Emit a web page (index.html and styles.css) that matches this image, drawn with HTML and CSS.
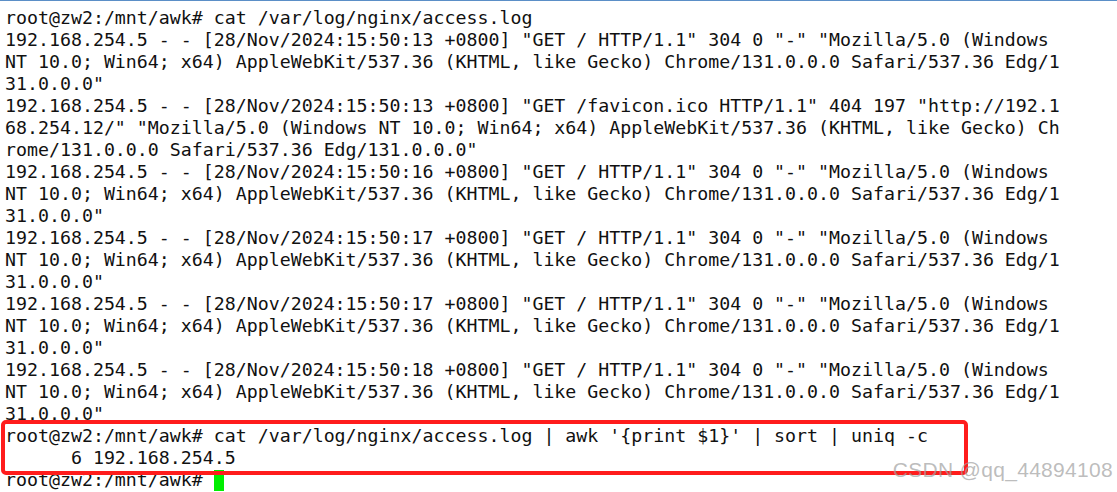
FILE: index.html
```html
<!DOCTYPE html>
<html lang="en">
<head>
<meta charset="utf-8">
<title>Terminal</title>
<link rel="stylesheet" href="styles.css">
</head>
<body>
<div class="term">
<div class="line">root@zw2:/mnt/awk# cat /var/log/nginx/access.log</div>
<div class="line">192.168.254.5 - - [28/Nov/2024:15:50:13 +0800] "GET / HTTP/1.1" 304 0 "-" "Mozilla/5.0 (Windows</div>
<div class="line">NT 10.0; Win64; x64) AppleWebKit/537.36 (KHTML, like Gecko) Chrome/131.0.0.0 Safari/537.36 Edg/1</div>
<div class="line">31.0.0.0"</div>
<div class="line">192.168.254.5 - - [28/Nov/2024:15:50:13 +0800] "GET /favicon.ico HTTP/1.1" 404 197 "http://192.1</div>
<div class="line">68.254.12/" "Mozilla/5.0 (Windows NT 10.0; Win64; x64) AppleWebKit/537.36 (KHTML, like Gecko) Ch</div>
<div class="line">rome/131.0.0.0 Safari/537.36 Edg/131.0.0.0"</div>
<div class="line">192.168.254.5 - - [28/Nov/2024:15:50:16 +0800] "GET / HTTP/1.1" 304 0 "-" "Mozilla/5.0 (Windows</div>
<div class="line">NT 10.0; Win64; x64) AppleWebKit/537.36 (KHTML, like Gecko) Chrome/131.0.0.0 Safari/537.36 Edg/1</div>
<div class="line">31.0.0.0"</div>
<div class="line">192.168.254.5 - - [28/Nov/2024:15:50:17 +0800] "GET / HTTP/1.1" 304 0 "-" "Mozilla/5.0 (Windows</div>
<div class="line">NT 10.0; Win64; x64) AppleWebKit/537.36 (KHTML, like Gecko) Chrome/131.0.0.0 Safari/537.36 Edg/1</div>
<div class="line">31.0.0.0"</div>
<div class="line">192.168.254.5 - - [28/Nov/2024:15:50:17 +0800] "GET / HTTP/1.1" 304 0 "-" "Mozilla/5.0 (Windows</div>
<div class="line">NT 10.0; Win64; x64) AppleWebKit/537.36 (KHTML, like Gecko) Chrome/131.0.0.0 Safari/537.36 Edg/1</div>
<div class="line">31.0.0.0"</div>
<div class="line">192.168.254.5 - - [28/Nov/2024:15:50:18 +0800] "GET / HTTP/1.1" 304 0 "-" "Mozilla/5.0 (Windows</div>
<div class="line">NT 10.0; Win64; x64) AppleWebKit/537.36 (KHTML, like Gecko) Chrome/131.0.0.0 Safari/537.36 Edg/1</div>
<div class="line">31.0.0.0"</div>
<div class="highlight">
<div class="line">root@zw2:/mnt/awk# cat /var/log/nginx/access.log | awk '{print $1}' | sort | uniq -c</div>
<div class="line">      6 192.168.254.5</div>
</div>
<div class="line">root@zw2:/mnt/awk# <span class="cursor"></span></div>
</div>
<div class="watermark">CSDN @qq_44894108</div>
</body>
</html>
```

FILE: styles.css
```css
html, body {
  margin: 0;
  padding: 0;
  background: #ffffff;
}

body {
  width: 1117px;
  height: 492px;
  overflow: hidden;
  position: relative;
  border-top: 1px solid #5b8fc7;
  box-sizing: border-box;
}

.term {
  padding: 6px 0 0 5px;
  font-family: "DejaVu Sans Mono", monospace;
  font-size: 18.25px;
  line-height: 22px;
  color: #111111;
}

.line {
  white-space: pre;
  height: 22px;
}

.highlight {
  position: relative;
}

.highlight::after {
  content: "";
  position: absolute;
  left: -4px;
  top: -5px;
  width: 959px;
  height: 47px;
  border: 4px solid #ff1c1c;
  border-radius: 5px;
}

.cursor {
  display: inline-block;
  width: 10px;
  height: 21px;
  background: #00ee00;
  vertical-align: -5px;
}

.watermark {
  position: absolute;
  right: 4px;
  bottom: 10px;
  font-family: "Liberation Sans", Arial, sans-serif;
  font-size: 21px;
  color: rgba(160, 160, 160, 0.7);
  letter-spacing: 0.3px;
}
```
